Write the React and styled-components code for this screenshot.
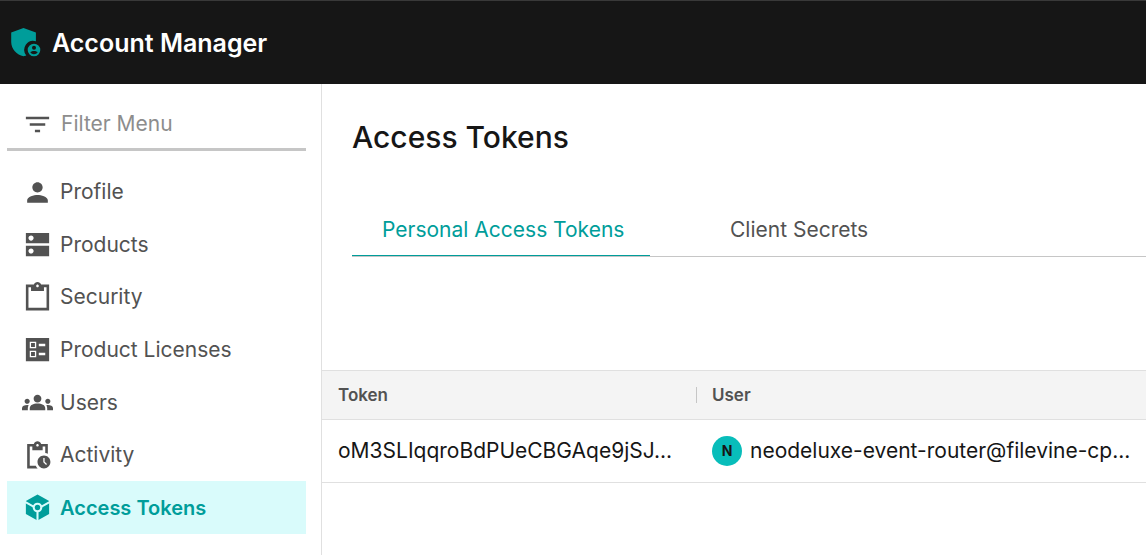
import React from 'react';
import styled, { createGlobalStyle } from 'styled-components';
import { MdFilterList, MdGroups, MdPerson } from 'react-icons/md';

const GlobalStyle = createGlobalStyle`
  *, *::before, *::after { box-sizing: border-box; }
  body {
    margin: 0;
    background: #fff;
    color: #161616;
    font-family: Inter, "Liberation Sans", sans-serif;
    font-size: 21px;
    line-height: 28px;
  }
`;

const Page = styled.div`
  display: flex;
  flex-direction: column;
  min-height: 100vh;
`;

const Header = styled.header`
  display: flex;
  align-items: center;
  gap: 10px;
  height: 84px;
  padding: 0 7px;
  border-top: 1px solid #393939;
  background: #161616;
  color: #fff;

  svg {
    width: 35px;
    height: 35px;
    color: #009d9a;
  }
`;

const Brand = styled.span`
  font-size: 25px;
  font-weight: 600;
`;

const Body = styled.div`
  display: flex;
  flex: 1;
`;

const Sidebar = styled.nav`
  flex: none;
  width: 322px;
  padding: 0 15px 0 7px;
  border-right: 1px solid #e0e0e0;
`;

const Filter = styled.label`
  display: flex;
  align-items: center;
  gap: 8px;
  height: 67px;
  padding: 16px 0 0 15px;
  border-bottom: 3px solid #c6c6c6;

  svg {
    flex: none;
    width: 31px;
    height: 31px;
    color: #525252;
  }
`;

const FilterInput = styled.input`
  flex: 1;
  min-width: 0;
  padding: 0;
  border: 0;
  outline: 0;
  background: none;
  color: #525252;
  font: inherit;

  &::placeholder {
    color: #8d8d8d;
    opacity: 1;
  }
`;

const Menu = styled.ul`
  display: grid;
  grid-auto-rows: 1fr;
  height: 368px;
  margin: 15px 0 0;
  padding: 0;
  list-style: none;
`;

const MenuLink = styled.a`
  display: flex;
  align-items: center;
  gap: 7px;
  height: 100%;
  padding-left: 15px;
  background: ${(p) => (p.$active ? '#d9fbfb' : 'transparent')};
  color: ${(p) => (p.$active ? '#009d9a' : '#525252')};
  font-size: ${(p) => (p.$active ? 20 : 21)}px;
  font-weight: ${(p) => (p.$active ? 600 : 400)};
  text-decoration: none;

  svg {
    width: 31px;
    height: 31px;
  }
`;

const Main = styled.main`
  flex: 1;
  min-width: 0;
`;

const Title = styled.h1`
  margin: 0;
  padding: 33px 30px 0;
  font-size: 30px;
  font-weight: 500;
  line-height: 40px;
`;

const Tabs = styled.div`
  display: flex;
  gap: 50px;
  margin: 46px 0 0 30px;
  border-bottom: 1px solid #c6c6c6;
`;

const Tab = styled.button`
  flex: none;
  width: 298px;
  height: 53px;
  padding: 2px 0 0 30px;
  border: 0;
  border-bottom: 1px solid ${(p) => (p['aria-selected'] ? '#009d9a' : 'transparent')};
  background: none;
  color: ${(p) => (p['aria-selected'] ? '#009d9a' : '#525252')};
  font: inherit;
  text-align: left;
  white-space: nowrap;
`;

const Table = styled.table`
  width: 100%;
  margin-top: 113px;
  border-collapse: collapse;
  table-layout: fixed;
`;

const HeadCell = styled.th`
  width: ${(p) => p.$width || 'auto'};
  height: 49px;
  padding: 0;
  border: solid #e0e0e0;
  border-width: 1px 0;
  background: #f4f4f4;
  color: #525252;
  font-size: 17px;
  font-weight: 600;
  line-height: 16px;
  text-align: left;
`;

const HeadLabel = styled.span`
  display: block;
  padding-left: 15px;
  border-left: 1px solid ${(p) => (p.$divided ? '#c6c6c6' : 'transparent')};
`;

const Cell = styled.td`
  height: 63px;
  padding: 0 0 0 16px;
  border-bottom: 1px solid #e0e0e0;
  white-space: nowrap;
`;

const User = styled.div`
  display: flex;
  align-items: center;
  gap: 8px;
`;

const Avatar = styled.span`
  display: grid;
  flex: none;
  place-items: center;
  width: 30px;
  height: 30px;
  border-radius: 50%;
  background: #08bdba;
  font-size: 14px;
  font-weight: 700;
`;

const makeIcon = (d) => () => (
  <svg viewBox="0 0 24 24" fill="currentColor" fillRule="evenodd" aria-hidden="true">
    <path d={d} />
  </svg>
);

const ServerIcon = makeIcon(
  'M21 3H3v8h18V3zM7 9c-1.1 0-2-.9-2-2s.9-2 2-2 2 .9 2 2-.9 2-2 2zM21 13H3v8h18v-8zM7 19c-1.1 0-2-.9-2-2s.9-2 2-2 2 .9 2 2-.9 2-2 2z',
);
const ClipboardIcon = makeIcon(
  'M21 2h-6.18C14.4.84 13.3 0 12 0S9.6.84 9.18 2H3v20h18V2zm-9 0c.55 0 1 .45 1 1s-.45 1-1 1-1-.45-1-1 .45-1 1-1zm7 18H5V4h2v3h10V4h2v16z',
);
const BallotIcon = makeIcon(
  'M13 9.5h5v-2h-5v2zm0 7h5v-2h-5v2zM21 21H3V3h18v18zM6 11h5V6H6v5zm1-4h3v3H7V7zM6 18h5v-5H6v5zm1-4h3v3H7v-3z',
);
const PendingIcon = makeIcon(
  'M17 12c-2.76 0-5 2.24-5 5s2.24 5 5 5 5-2.24 5-5-2.24-5-5-5zm1.65 7.35L16.5 17.2V14h1v2.79l1.85 1.85-.7.71zM20 3h-5.18C14.4 1.84 13.3 1 12 1S9.6 1.84 9.18 3H4v19h8.11c-.6-.57-1.07-1.25-1.43-2H6V5h2v3h8V5h2v5.08c.71.1 1.38.31 2 .6V3zm-8 2c-.55 0-1-.45-1-1s.45-1 1-1 1 .45 1 1-.45 1-1 1z',
);

const TokenIcon = () => (
  <svg viewBox="0 0 24 24" fill="currentColor" aria-hidden="true">
    <mask id="token-faces">
      <path d="M0 0h24v24H0z" fill="#fff" />
      <path d="M2 7.4 12 13 22 7.4M12 13v10" fill="none" stroke="#000" strokeWidth="1.6" />
      <circle cx="12" cy="12" r="3.7" fill="#000" />
      <circle cx="12" cy="12" r="2.1" fill="#fff" />
    </mask>
    <path d="m12 2 9 5v10l-9 5-9-5V7z" mask="url(#token-faces)" />
  </svg>
);

const ShieldIcon = () => (
  <svg viewBox="0 0 35 35" fill="currentColor" aria-hidden="true">
    <path d="M16.5 3 4.2 7.6v9.4c0 7 5.6 12.8 12.3 14.3l2.8-.8A9 9 0 0 1 28.9 16.2V7.6z" />
    <path
      fillRule="evenodd"
      d="M27 18.7a6.3 6.3 0 1 0 0 12.6 6.3 6.3 0 0 0 0-12.6zm0 2a2 2 0 1 1 0 4 2 2 0 0 1 0-4zm0 5.2c1.8 0 3.1.6 3.7 1.4-.8 1.2-2.1 2-3.7 2s-2.9-.8-3.7-2c.6-.8 1.9-1.4 3.7-1.4z"
    />
  </svg>
);

const menuItems = [
  { label: 'Profile', Icon: MdPerson },
  { label: 'Products', Icon: ServerIcon },
  { label: 'Security', Icon: ClipboardIcon },
  { label: 'Product Licenses', Icon: BallotIcon },
  { label: 'Users', Icon: MdGroups },
  { label: 'Activity', Icon: PendingIcon },
  { label: 'Access Tokens', Icon: TokenIcon, active: true },
];

export default function App() {
  return (
    <Page>
      <GlobalStyle />
      <Header>
        <ShieldIcon />
        <Brand>Account Manager</Brand>
      </Header>
      <Body>
        <Sidebar>
          <Filter>
            <MdFilterList />
            <FilterInput type="text" placeholder="Filter Menu" aria-label="Filter Menu" />
          </Filter>
          <Menu>
            {menuItems.map(({ label, Icon, active }) => (
              <li key={label}>
                <MenuLink href="#" $active={active} aria-current={active ? 'page' : undefined}>
                  <Icon />
                  {label}
                </MenuLink>
              </li>
            ))}
          </Menu>
        </Sidebar>
        <Main>
          <Title>Access Tokens</Title>
          <Tabs role="tablist">
            <Tab type="button" role="tab" aria-selected={true}>
              Personal Access Tokens
            </Tab>
            <Tab type="button" role="tab" aria-selected={false}>
              Client Secrets
            </Tab>
          </Tabs>
          <Table>
            <thead>
              <tr>
                <HeadCell $width="374px">
                  <HeadLabel>Token</HeadLabel>
                </HeadCell>
                <HeadCell>
                  <HeadLabel $divided>User</HeadLabel>
                </HeadCell>
              </tr>
            </thead>
            <tbody>
              <tr>
                <Cell>oM3SLIqqroBdPUeCBGAqe9jSJ...</Cell>
                <Cell>
                  <User>
                    <Avatar>N</Avatar>
                    neodeluxe-event-router@filevine-cp...
                  </User>
                </Cell>
              </tr>
            </tbody>
          </Table>
        </Main>
      </Body>
    </Page>
  );
}
